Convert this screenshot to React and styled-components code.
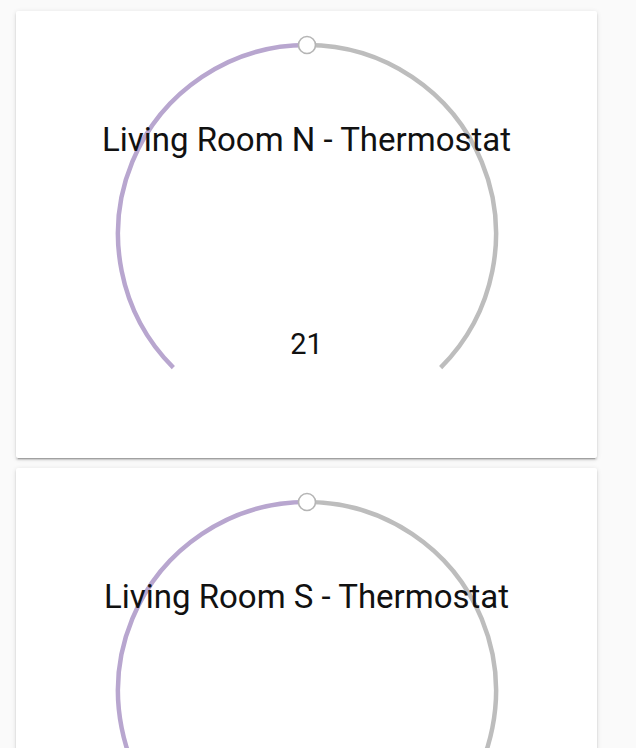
import React from "react"
import styled, { createGlobalStyle } from "styled-components"

const GlobalStyle = createGlobalStyle`
  html, body {
    margin: 0;
    padding: 0;
    background: #fafafa;
    font-family: Roboto, "Noto Sans", Arial, sans-serif;
  }
`

const SIZE = 400
const C = SIZE / 2
const R = 189
const STROKE = 4.5

// point on the dial ring, angle in degrees (0 = right, 90 = up)
const polar = (deg) => {
  const a = (deg * Math.PI) / 180
  return [C + R * Math.cos(a), C - R * Math.sin(a)]
}

const arcPath = (from, to) => {
  const [x1, y1] = polar(from)
  const [x2, y2] = polar(to)
  const large = from - to > 180 ? 1 : 0
  return `M ${x1} ${y1} A ${R} ${R} 0 ${large} 1 ${x2} ${y2}`
}

const rooms = [
  { name: "Living Room N - Thermostat", value: 21, level: 0.5 },
  { name: "Living Room S - Thermostat", value: 21, level: 0.5 },
]

const Dial = ({ level }) => {
  // dial sweeps 270deg, from bottom-left (225) clockwise to bottom-right (-45)
  const knob = 225 - 270 * level
  const [kx, ky] = polar(knob)
  return (
    <svg width={SIZE} height={SIZE} viewBox={`0 0 ${SIZE} ${SIZE}`}>
      <path d={arcPath(225, knob)} fill="none" stroke="#b8a6cf" strokeWidth={STROKE} />
      <path d={arcPath(knob, -45)} fill="none" stroke="#bdbdbd" strokeWidth={STROKE} />
      <circle cx={kx} cy={ky} r={8.5} fill="#fff" stroke="#b5b5b5" strokeWidth={1.6} />
    </svg>
  )
}

const Thermostat = ({ name, value, level }) => (
  <Card>
    <DialWrap>
      <Dial level={level} />
      <Title>{name}</Title>
      <Value>{value}</Value>
    </DialWrap>
  </Card>
)

const App = () => (
  <>
    <GlobalStyle />
    <Page>
      {rooms.map((room) => (
        <Thermostat key={room.name} {...room} />
      ))}
    </Page>
  </>
)

const Page = styled.main`
  display: flex;
  flex-direction: column;
  gap: 10px;
  width: 581px;
  padding: 11px 0 0 16px;
`

const Card = styled.section`
  display: flex;
  justify-content: center;
  padding: 23px 0 24px;
  background: #fff;
  border-radius: 2px;
  box-shadow: 0 2px 2px 0 rgba(0, 0, 0, 0.14), 0 1px 5px 0 rgba(0, 0, 0, 0.12),
    0 3px 1px -2px rgba(0, 0, 0, 0.2);
`

const DialWrap = styled.div`
  position: relative;
  width: ${SIZE}px;
  height: ${SIZE}px;

  svg {
    display: block;
  }
`

const Title = styled.h2`
  position: absolute;
  left: -80px;
  right: -80px;
  top: 86px;
  margin: 0;
  text-align: center;
  font-size: 33px;
  font-weight: 400;
  line-height: 40px;
  color: #111;
`

const Value = styled.div`
  position: absolute;
  left: 0;
  right: 0;
  top: 293px;
  text-align: center;
  font-size: 29px;
  line-height: 34px;
  color: #111;
`

export default App
